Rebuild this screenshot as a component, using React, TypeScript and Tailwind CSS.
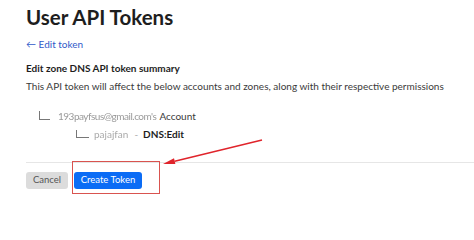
import React from 'react';

function App() {
    return (
        <div className="relative w-[474px] h-[204px] overflow-hidden bg-white font-['Lato',sans-serif] text-[#333]">
            <div className="pl-[26px] pt-[4px]">
                <h1 className="text-[20.5px] font-bold leading-[26px] text-[#1e1e1e]">User API Tokens</h1>
                <div className="mt-[7px] text-[10px] leading-[14px] text-[#3159c9]">← Edit token</div>
                <div className="mt-[10px] text-[10px] leading-[14px] font-bold text-[#1e1e1e]">Edit zone DNS API token summary</div>
                <div className="mt-[4px] text-[10px] leading-[14px] text-[#3a3a3a]">
                    This API token will affect the below accounts and zones, along with their respective permissions
                </div>

                <div className="mt-[16px] ml-[13px] flex items-end text-[10px] leading-[14px]">
                    <div className="w-[11px] h-[9px] border-l border-b border-[#777] mb-[3px]"></div>
                    <span className="ml-[8px] text-[#9a9a9a] blur-[0.5px] tracking-[-0.5px]">193payfsus@gmail.com's</span>
                    <span className="ml-[3px] text-[#3a3a3a]">Account</span>
                </div>
                <div className="mt-[4px] ml-[50px] flex items-end text-[10px] leading-[14px]">
                    <div className="w-[13px] h-[8px] border-l border-b border-[#777] mb-[3px]"></div>
                    <span className="ml-[5px] text-[#aaa] blur-[0.6px]">pajajfan</span>
                    <span className="ml-[6px] text-[#aaa]">-</span>
                    <span className="ml-[5px] font-bold text-[#1e1e1e]">DNS:Edit</span>
                </div>

                <div className="mt-[21px] border-t border-[#e6e6e6]"></div>

                <div className="mt-[9px] flex gap-[6px]">
                    <button className="h-[17px] w-[42px] rounded-[3px] bg-[#dcdcdc] text-[9.5px] text-[#555]">Cancel</button>
                    <button className="h-[17px] w-[68px] rounded-[3px] bg-[#0b6cf5] text-[9.5px] text-white">Create Token</button>
                </div>
            </div>

            <div className="absolute left-[72px] top-[161px] w-[88px] h-[33px] border border-[#d9534f]"></div>
            <svg className="absolute left-0 top-0" width="474" height="204" viewBox="0 0 474 204">
                <line x1="174.7" y1="161.2" x2="262" y2="140" stroke="#e0242b" strokeWidth="1.5" />
                <polygon points="163,164 175.4,164.1 174,158.3" fill="#e0242b" />
            </svg>
        </div>
    );
}

export default App;
